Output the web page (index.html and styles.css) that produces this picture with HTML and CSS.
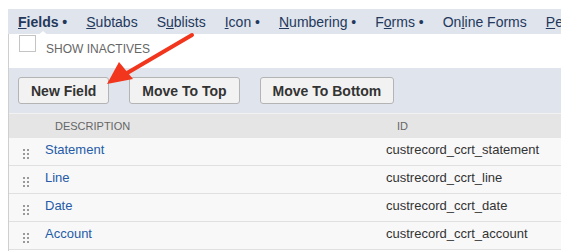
FILE: index.html
```html
<!DOCTYPE html>
<html lang="en">
<head>
    <meta charset="UTF-8">
    <title>Fields</title>
    <link rel="stylesheet" href="styles.css">
</head>
<body>

<div class="page">
    <div class="tabs">
        <span class="tab active"><u>F</u>ields •<i class="notch"></i></span>
        <span class="tab"><u>S</u>ubtabs</span>
        <span class="tab">S<u>u</u>blists</span>
        <span class="tab"><u>I</u>con •</span>
        <span class="tab"><u>N</u>umbering •</span>
        <span class="tab">F<u>o</u>rms •</span>
        <span class="tab">On<u>l</u>ine Forms</span>
        <span class="tab"><u>P</u>ermissions</span>
    </div>

    <div class="panel">
        <div class="inactives">
            <span class="checkbox"></span>
            <span>SHOW INACTIVES</span>
        </div>

        <div class="buttons">
            <button class="btn">New Field</button>
            <button class="btn">Move To Top</button>
            <button class="btn">Move To Bottom</button>
        </div>

        <div class="row head">
            <div class="col-desc">DESCRIPTION</div>
            <div class="col-id">ID</div>
        </div>
        <div class="row">
            <span class="handle"></span>
            <a class="col-desc">Statement</a>
            <div class="col-id">custrecord_ccrt_statement</div>
        </div>
        <div class="row">
            <span class="handle"></span>
            <a class="col-desc">Line</a>
            <div class="col-id">custrecord_ccrt_line</div>
        </div>
        <div class="row">
            <span class="handle"></span>
            <a class="col-desc">Date</a>
            <div class="col-id">custrecord_ccrt_date</div>
        </div>
        <div class="row">
            <span class="handle"></span>
            <a class="col-desc">Account</a>
            <div class="col-id">custrecord_ccrt_account</div>
        </div>
    </div>

    <svg class="arrow" width="561" height="251" viewBox="0 0 561 251">
        <line x1="192" y1="35" x2="122" y2="76" stroke="#f2361d" stroke-width="4" stroke-linecap="round"/>
        <polygon points="107,84 119,62 133,79" fill="#f2361d"/>
    </svg>
</div>

</body>
</html>
```

FILE: styles.css
```css
body {
    margin: 0;
    font-family: "Liberation Sans", Arial, sans-serif;
    background: white;
}
.page {
    position: relative;
    width: 561px;
    height: 251px;
    overflow: hidden;
    padding: 9px 0 0 8px;
    box-sizing: border-box;
}
.tabs {
    position: relative;
    display: flex;
    gap: 19px;
    height: 25px;
    align-items: center;
    padding-left: 10px;
    background: #dfe4ed;
    font-size: 14px;
    color: #24385b;
    white-space: nowrap;
    overflow: hidden;
}
.tab {
    position: relative;
    line-height: 25px;
    padding-top: 1px;
}
.tab.active {
    font-weight: bold;
}
.notch {
    position: absolute;
    left: 19px;
    bottom: -1px;
    width: 0;
    height: 0;
    border-left: 6px solid transparent;
    border-right: 6px solid transparent;
    border-bottom: 5px solid white;
}
.panel {
    border-left: 1px solid #cfcfcf;
    height: 220px;
}
.inactives {
    display: flex;
    align-items: center;
    height: 34px;
    padding-left: 10px;
    font-size: 12px;
    color: #666;
}
.checkbox {
    width: 15px;
    height: 15px;
    border: 1px solid #c4c4c4;
    background: white;
    margin: -16px 10px 0 0;
}
.inactives span:last-child {
    margin-top: -4px;
}
.buttons {
    display: flex;
    gap: 20px;
    height: 45px;
    align-items: center;
    padding-left: 9px;
    background: #dfe4ed;
}
.btn {
    height: 27px;
    padding: 0 12px;
    border: 1px solid #b4b4b4;
    border-radius: 3px;
    background: #f2f2f2;
    font-family: "Liberation Sans", Arial, sans-serif;
    font-size: 14px;
    font-weight: bold;
    color: #333;
}
.row {
    position: relative;
    display: flex;
    height: 27px;
    border-bottom: 1px solid #e0e0e0;
    background: #f8f8f8;
    font-size: 13px;
}
.col-desc {
    width: 341px;
    padding-left: 36px;
    padding-top: 4px;
    color: #255ba8;
}
.col-id {
    padding-top: 4px;
    color: #333;
}
.row.head {
    height: 24px;
    border-top: 1px solid #f2f2f2;
    border-bottom: none;
    background: #e5e5e5;
    font-size: 11px;
    align-items: center;
}
.row.head .col-desc {
    padding: 0 0 0 46px;
    width: 331px;
    color: #666;
}
.row.head .col-id {
    padding: 0 0 0 11px;
    color: #666;
}
.handle {
    position: absolute;
    left: 13px;
    top: 10px;
    width: 7px;
    height: 12px;
    background: radial-gradient(circle, #9a9a9a 1px, transparent 1.2px) 0 0 / 4px 4px;
}
.arrow {
    position: absolute;
    left: 0;
    top: 0;
    pointer-events: none;
}
```
